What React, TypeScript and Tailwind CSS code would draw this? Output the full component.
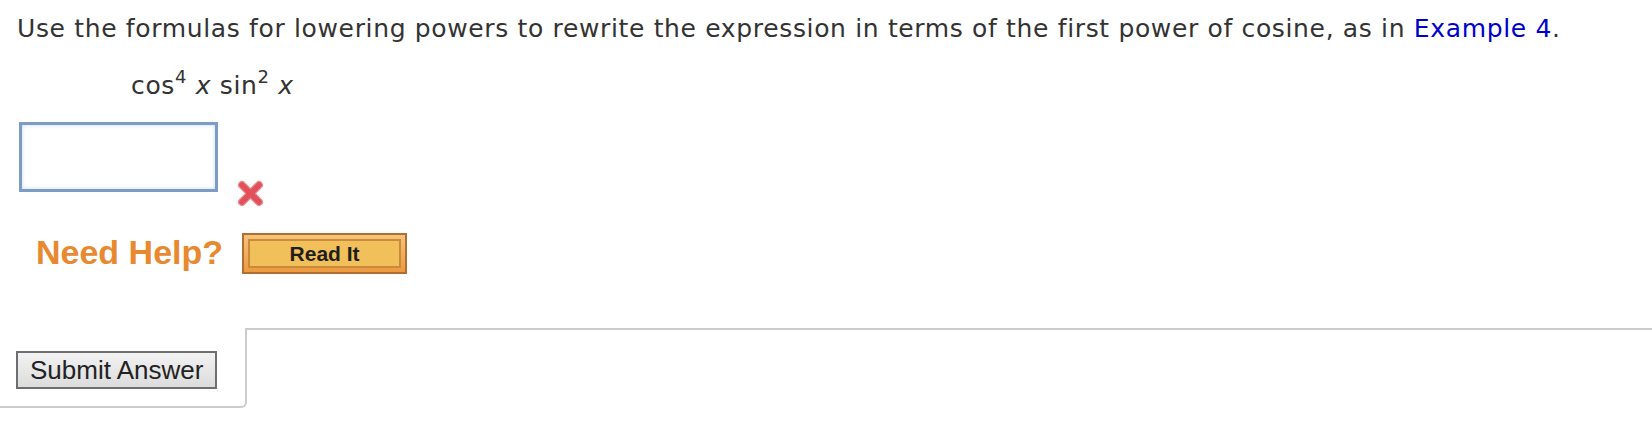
import React from "react";

function WrongMark() {
  return (
    <svg width="27" height="27" viewBox="0 0 27 27" className="block">
      <g strokeLinecap="round">
        <line x1="5" y1="5" x2="22" y2="22" stroke="#ec8a90" strokeWidth="8" />
        <line x1="22" y1="5" x2="5" y2="22" stroke="#ec8a90" strokeWidth="8" />
        <line x1="5" y1="5" x2="22" y2="22" stroke="#e0515b" strokeWidth="5.5" />
        <line x1="22" y1="5" x2="5" y2="22" stroke="#e0515b" strokeWidth="5.5" />
      </g>
    </svg>
  );
}

export default function App() {
  return (
    <div className="h-[428px] w-full bg-white overflow-hidden">
      <p className="pt-[15px] pl-[17px] text-[25px] leading-[28px] tracking-[0.65px] text-[#333] font-['DejaVu_Sans',sans-serif] whitespace-nowrap">
        Use the formulas for lowering powers to rewrite the expression in terms of the first power of cosine, as in{" "}
        <a className="text-[#0000cc]">Example 4</a>.
      </p>

      <p className="mt-[29px] pl-[131px] text-[25px] leading-[28px] tracking-[0.65px] text-[#333] font-['DejaVu_Sans',sans-serif] whitespace-nowrap">
        cos<sup className="text-[18px] -top-[11px]">4</sup> <i>x</i> sin
        <sup className="text-[18px] -top-[11px]">2</sup> <i>x</i>
      </p>

      <div className="mt-[22px] pl-[19px] flex items-start">
        <input
          type="text"
          className="w-[199px] h-[70px] border-[3px] border-[#7c9cc6] bg-white shadow-[inset_0_0_4px_#c9dbf2] outline-none"
        />
        <div className="ml-[19px] mt-[58px]">
          <WrongMark />
        </div>
      </div>

      <div className="mt-[26px] pl-[36px] flex items-start">
        <span className="mt-[2px] text-[34px] leading-[34px] font-bold text-[#e8892f] font-['Liberation_Sans',Arial,sans-serif]">
          Need Help?
        </span>
        <button className="ml-[19px] w-[165px] h-[41px] border-2 border-[#b06f30] bg-gradient-to-b from-[#f6c27a] to-[#ec9a3e] p-[4px]">
          <span className="flex h-full w-full items-center justify-center border-2 border-[#c98a3c] bg-[#f2c05a] text-[21px] font-bold text-[#1e1e1e] font-['Liberation_Sans',Arial,sans-serif]">
            Read It
          </span>
        </button>
      </div>

      <div className="mt-[54px] flex items-start">
        <div className="w-[247px] h-[80px] border-r-2 border-b-2 border-[#cccccc] rounded-br-[6px] pt-[23px] pl-[16px]">
          <button className="w-[201px] h-[38px] border-2 border-[#6e6e6e] bg-gradient-to-b from-[#f2f2f2] to-[#dcdcdc] pl-[12px] text-left text-[26px] leading-[34px] text-[#222] font-['Liberation_Sans',Arial,sans-serif]">
            Submit Answer
          </button>
        </div>
        <div className="flex-1 h-[2px] bg-[#cccccc]" />
      </div>
    </div>
  );
}
